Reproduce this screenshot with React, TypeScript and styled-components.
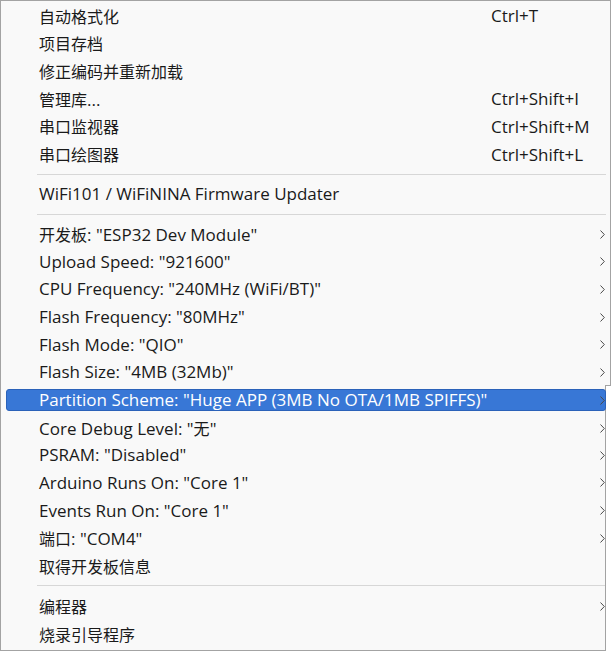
import React from 'react';
import styled, { createGlobalStyle } from 'styled-components';

const GlobalStyle = createGlobalStyle`
  html, body {
    margin: 0;
    padding: 0;
    background: #ffffff;
  }
`;

const Frame = styled.div`
  display: flex;
  align-items: flex-start;
  width: 611px;
  height: 651px;
  overflow: hidden;
`;

const Menu = styled.div`
  position: relative;
  box-sizing: border-box;
  width: 606px;
  height: 651px;
  padding-top: 1px;
  background: #f9f9f9;
  border: 1px solid #a3a3a3;
  border-right: none;
  font-family: "Open Sans", "Noto Sans CJK SC", sans-serif;
  font-size: 17px;
  color: #1a1a1a;

  &::after {
    content: '';
    position: absolute;
    right: 0;
    top: 384px;
    bottom: 0;
    width: 1px;
    background: #a3a3a3;
  }
`;

const Strip = styled.div`
  box-sizing: border-box;
  width: 5px;
  height: 386px;
  background: #f9f9f9;
  border-top: 1px solid #a3a3a3;
  border-right: 1px solid #a3a3a3;
  border-bottom: 1px solid #a3a3a3;
`;

const Row = styled.div`
  display: flex;
  align-items: center;
  height: 27.67px;
  padding-left: 5px;
`;

const ItemBody = styled.div<{ $active?: boolean }>`
  position: relative;
  z-index: 1;
  box-sizing: border-box;
  display: grid;
  grid-template-columns: 452px 1fr 12px;
  align-items: center;
  width: 600px;
  height: 22px;
  padding-left: 32px;
  border-radius: 3px;
  white-space: nowrap;
  line-height: 20px;
  background: ${(p) => (p.$active ? '#3877d6' : 'transparent')};
  border: 1px solid ${(p) => (p.$active ? '#2b62b9' : 'transparent')};
  color: ${(p) => (p.$active ? '#ffffff' : '#1a1a1a')};
`;

const Label = styled.span`
  overflow: visible;
`;

const Cjk = styled.span`
  font-family: "Noto Sans CJK SC", sans-serif;
  font-size: 16px;
`;

const Shortcut = styled.span`
  color: #1a1a1a;
`;

const ArrowCell = styled.span`
  display: flex;
  justify-content: flex-end;
  align-items: center;
`;

const Separator = styled.div`
  display: flex;
  align-items: center;
  height: 12.33px;
  padding-left: 36px;

  &::before {
    content: '';
    display: block;
    width: 571px;
    height: 1px;
    background: #d7d7d7;
  }
`;

type Entry =
  | { kind: 'item'; label: string; shortcut?: string; submenu?: boolean; active?: boolean }
  | { kind: 'sep' };

const entries: Entry[] = [
  { kind: 'item', label: '自动格式化', shortcut: 'Ctrl+T' },
  { kind: 'item', label: '项目存档' },
  { kind: 'item', label: '修正编码并重新加载' },
  { kind: 'item', label: '管理库...', shortcut: 'Ctrl+Shift+I' },
  { kind: 'item', label: '串口监视器', shortcut: 'Ctrl+Shift+M' },
  { kind: 'item', label: '串口绘图器', shortcut: 'Ctrl+Shift+L' },
  { kind: 'sep' },
  { kind: 'item', label: 'WiFi101 / WiFiNINA Firmware Updater' },
  { kind: 'sep' },
  { kind: 'item', label: '开发板: "ESP32 Dev Module"', submenu: true },
  { kind: 'item', label: 'Upload Speed: "921600"', submenu: true },
  { kind: 'item', label: 'CPU Frequency: "240MHz (WiFi/BT)"', submenu: true },
  { kind: 'item', label: 'Flash Frequency: "80MHz"', submenu: true },
  { kind: 'item', label: 'Flash Mode: "QIO"', submenu: true },
  { kind: 'item', label: 'Flash Size: "4MB (32Mb)"', submenu: true },
  { kind: 'item', label: 'Partition Scheme: "Huge APP (3MB No OTA/1MB SPIFFS)"', submenu: true, active: true },
  { kind: 'item', label: 'Core Debug Level: "无"', submenu: true },
  { kind: 'item', label: 'PSRAM: "Disabled"', submenu: true },
  { kind: 'item', label: 'Arduino Runs On: "Core 1"', submenu: true },
  { kind: 'item', label: 'Events Run On: "Core 1"', submenu: true },
  { kind: 'item', label: '端口: "COM4"', submenu: true },
  { kind: 'item', label: '取得开发板信息' },
  { kind: 'sep' },
  { kind: 'item', label: '编程器', submenu: true },
  { kind: 'item', label: '烧录引导程序' },
];

// Latin text is set a touch larger than the CJK runs, as in the original UI font
const renderLabel = (text: string) =>
  text.split(/([\u3000-\u9fff\uff00-\uffef]+)/).map((part, i) =>
    /[\u3000-\u9fff\uff00-\uffef]/.test(part) ? <Cjk key={i}>{part}</Cjk> : part
  );

const Chevron = () => (
  <svg width="5" height="9" viewBox="0 0 5 9">
    <polyline points="0.5,0.5 4.3,4.5 0.5,8.5" fill="none" stroke="#4a4a4a" strokeWidth="1" />
  </svg>
);

const App: React.FC = () => {
  return (
    <>
      <GlobalStyle />
      <Frame>
        <Menu>
          {entries.map((e, i) =>
            e.kind === 'sep' ? (
              <Separator key={i} />
            ) : (
              <Row key={i}>
                <ItemBody $active={e.active}>
                  <Label>{renderLabel(e.label)}</Label>
                  <Shortcut>{e.shortcut ?? ''}</Shortcut>
                  <ArrowCell>{e.submenu ? <Chevron /> : null}</ArrowCell>
                </ItemBody>
              </Row>
            )
          )}
        </Menu>
        <Strip />
      </Frame>
    </>
  );
};

export default App;
